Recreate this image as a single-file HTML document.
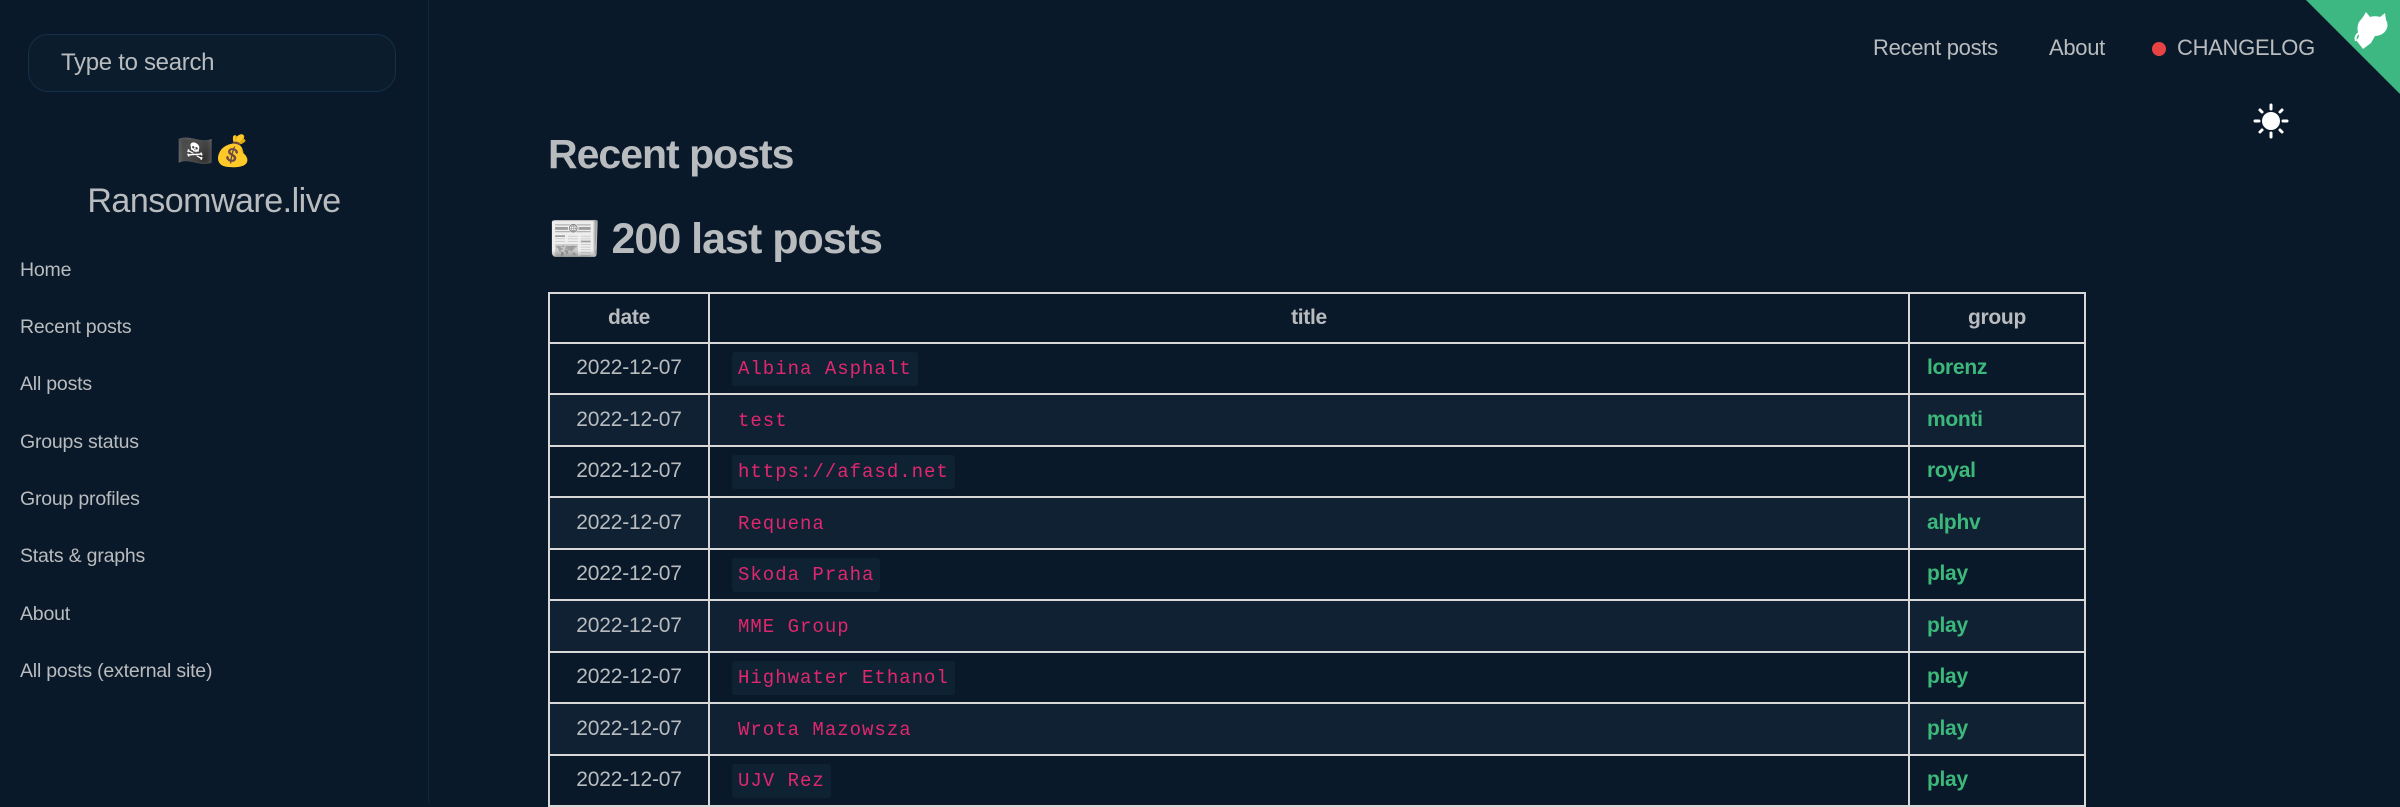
<!DOCTYPE html>
<html><head><meta charset="utf-8"><style>
html,body{margin:0;padding:0;width:2400px;height:803px;overflow:hidden;background:#0a1929;font-family:"Liberation Sans",sans-serif;color:#b9bcbf}
.side{position:absolute;left:0;top:0;width:428px;height:803px;background:#0a1929;border-right:1px solid #11263a}
.search{position:absolute;left:28px;top:34px;width:368px;height:58px;border:1px solid #14304a;border-radius:20px;background:#0b1c2d;box-sizing:border-box;padding-left:32px;font-size:24px;line-height:56px;color:#b9bcbf;letter-spacing:-0.3px}
.emo{position:absolute;left:0;width:428px;top:134px;text-align:center;font-size:30px;line-height:36px}
.brand{position:absolute;left:0;width:428px;top:177px;text-align:center;font-size:34px;line-height:48px;color:#b9bcbf;letter-spacing:-0.5px}
.nav a{position:absolute;left:20px;font-size:19.5px;color:#b9bcbf;text-decoration:none;letter-spacing:-0.2px}
.top a{position:absolute;top:35px;font-size:22px;color:#b9bcbf;text-decoration:none;letter-spacing:-0.3px}
.dot{position:absolute;left:2152px;top:42px;width:14px;height:14px;border-radius:50%;background:#e84343}
h1{position:absolute;left:548px;top:131px;margin:0;font-size:41px;font-weight:bold;letter-spacing:-1px;color:#b9bcbf}
h2{position:absolute;left:548px;top:214px;margin:0;font-size:43px;font-weight:bold;letter-spacing:-1px;color:#b9bcbf}
table{position:absolute;left:548px;top:292px;border-collapse:collapse;width:1538px}
td,th{border:2px solid #d8d8d8;height:49.5px;padding:0;font-size:21px;box-sizing:border-box}
th{font-weight:bold;text-align:center;color:#b9bcbf;letter-spacing:-0.3px}
td{height:51.5px}
tr:nth-child(odd) td{background:#0f2133}
td.d{text-align:center;width:160px;color:#b9bcbf;letter-spacing:-0.2px}
td.t{padding-left:22px}
td.g{padding-left:17px;width:160px;color:#3cb87a;font-weight:bold;letter-spacing:-0.3px}
code{font-family:"Liberation Mono",monospace;font-size:19px;color:#e0276e;background:#0f2233;padding:6px 6px;border-radius:3px;letter-spacing:1px}
tr:nth-child(odd) code{background:transparent}
</style></head><body>
<div class="side">
<div class="search">Type to search</div>
<div class="emo">🏴‍☠️💰</div>
<div class="brand">Ransomware.live</div>
<div class="nav">
<a style="top:259px">Home</a>
<a style="top:316px">Recent posts</a>
<a style="top:373px">All posts</a>
<a style="top:431px">Groups status</a>
<a style="top:488px">Group profiles</a>
<a style="top:545px">Stats &amp; graphs</a>
<a style="top:603px">About</a>
<a style="top:660px">All posts (external site)</a>
</div>
</div>
<div class="top">
<a style="left:1873px">Recent posts</a>
<a style="left:2049px">About</a>
<a style="left:2177px">CHANGELOG</a>
</div>
<div class="dot"></div>
<svg style="position:absolute;left:2240px;top:90px" width="62" height="62" viewBox="0 0 62 62">
<circle cx="31" cy="31" r="9" fill="#fff"/>
<g stroke="#fff" stroke-width="3" stroke-linecap="round">
<line x1="31" y1="15" x2="31" y2="19"/><line x1="31" y1="43" x2="31" y2="47"/>
<line x1="15" y1="31" x2="19" y2="31"/><line x1="43" y1="31" x2="47" y2="31"/>
<line x1="20" y1="20" x2="22" y2="22"/><line x1="40" y1="40" x2="42" y2="42"/>
<line x1="42" y1="20" x2="40" y2="22"/><line x1="20" y1="42" x2="22" y2="40"/>
</g></svg>
<svg style="position:absolute;left:2300px;top:0" width="100" height="100" viewBox="0 0 100 100">
<polygon points="6,0 100,0 100,94" fill="#3eb882"/>
<path d="M63 17l3-5 4 5c3-1 7-1 10 0l5-4 1 7c2 3 2 7 0 10-2 4-7 6-11 6l-4 7-8 6-7-9c2-1 3-3 3-5-2-4-2-9 0-13z" fill="#fff"/>
<path d="M59 33c-3 2-4 5-3 8" stroke="#fff" stroke-width="2" fill="none"/>
</svg>
<h1>Recent posts</h1>
<h2>📰 200 last posts</h2>
<table>
<tr><th style="width:160px">date</th><th>title</th><th style="width:176px">group</th></tr>
<tr><td class="d">2022-12-07</td><td class="t"><code>Albina Asphalt</code></td><td class="g">lorenz</td></tr>
<tr><td class="d">2022-12-07</td><td class="t"><code>test</code></td><td class="g">monti</td></tr>
<tr><td class="d">2022-12-07</td><td class="t"><code>https://afasd.net</code></td><td class="g">royal</td></tr>
<tr><td class="d">2022-12-07</td><td class="t"><code>Requena</code></td><td class="g">alphv</td></tr>
<tr><td class="d">2022-12-07</td><td class="t"><code>Skoda Praha</code></td><td class="g">play</td></tr>
<tr><td class="d">2022-12-07</td><td class="t"><code>MME Group</code></td><td class="g">play</td></tr>
<tr><td class="d">2022-12-07</td><td class="t"><code>Highwater Ethanol</code></td><td class="g">play</td></tr>
<tr><td class="d">2022-12-07</td><td class="t"><code>Wrota Mazowsza</code></td><td class="g">play</td></tr>
<tr><td class="d">2022-12-07</td><td class="t"><code>UJV Rez</code></td><td class="g">play</td></tr>
</table>
</body></html>
